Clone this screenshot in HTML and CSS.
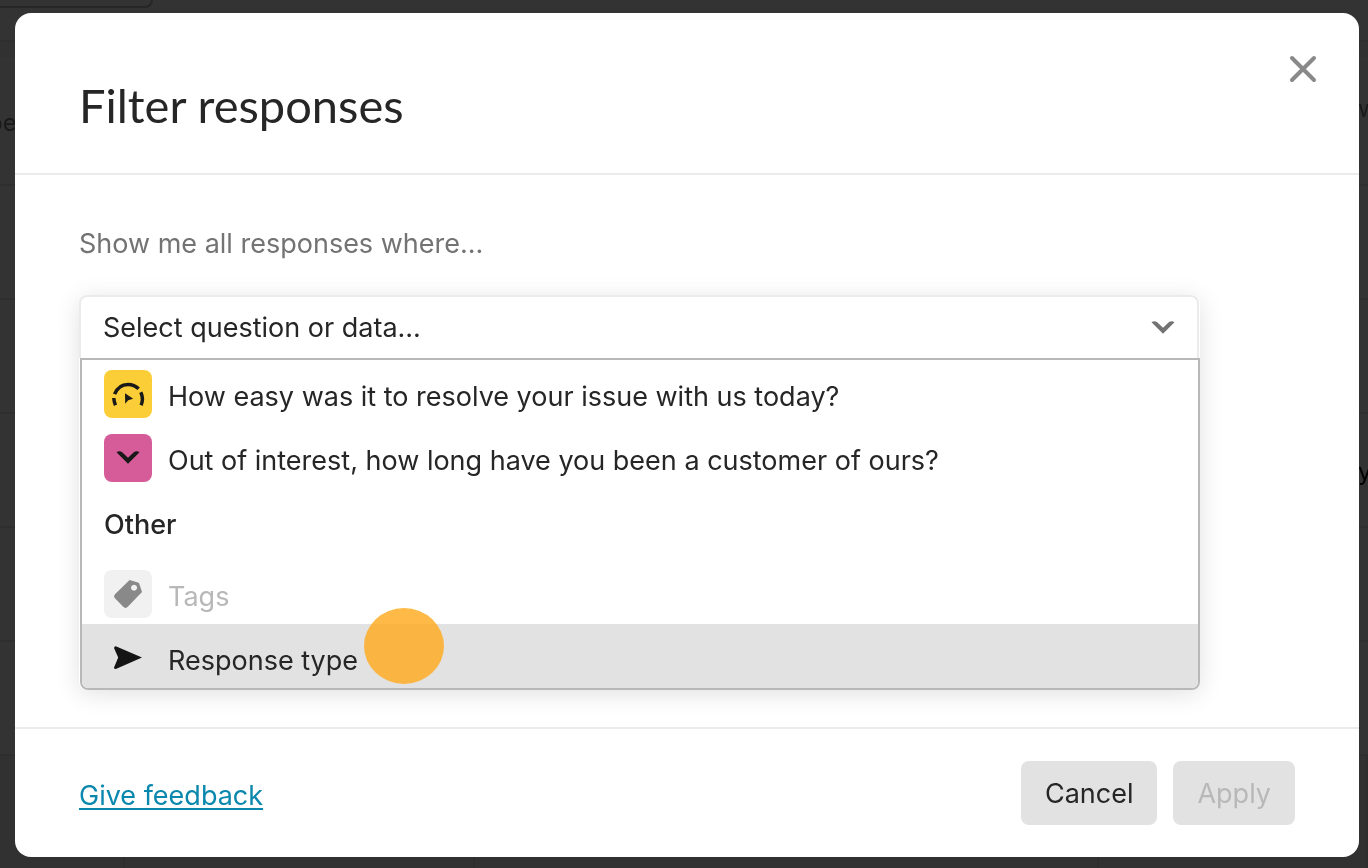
FILE: index.html
```html
<!DOCTYPE html>
<html lang="en">
<head>
    <meta charset="UTF-8">
    <meta name="viewport" content="width=device-width, initial-scale=1.0">
    <title>Filter responses</title>
    <link rel="stylesheet" href="styles.css">
</head>
<body>
    <!-- results table behind the dialog -->
    <div class="page" aria-hidden="true">
        <div class="toolbar"><div class="search"></div></div>
        <div class="strip"></div>
        <div class="row head"><span class="cut-left">pe</span><span class="cut-right">w</span></div>
        <div class="row"></div>
        <div class="row"></div>
        <div class="row"><span></span><span class="cut-right dark">y</span></div>
        <div class="row"></div>
        <div class="row"></div>
        <div class="columns"><div></div><div></div><div></div><div></div></div>
    </div>

    <div class="modal" role="dialog" aria-labelledby="title">
        <header class="modal-header">
            <h1 id="title">Filter responses</h1>
            <button class="close" type="button" aria-label="Close">
                <svg width="28" height="28" viewBox="0 0 28 28"><path d="M3 3l22 22M25 3L3 25" stroke="#898989" stroke-width="4" stroke-linecap="round"/></svg>
            </button>
        </header>

        <main class="modal-body">
            <label class="intro" for="field">Show me all responses where...</label>
            <div class="dropdown">
                <div class="control">
                    <select id="field">
                        <option>Select question or data...</option>
                    </select>
                    <svg class="chevron" width="24" height="14" viewBox="0 0 24 14"><path d="M.5 1.200Q3.500-.6 6.200 1.200L12 6.800l5.800-5.600Q20.500-.6 23.500 1.200L12 12.800z" fill="#737373"/></svg>
                </div>
                <ul class="menu" role="listbox" aria-label="Questions and data">
                    <li class="option" role="option">
                        <span class="icon yellow">
                            <svg width="48" height="48" viewBox="0 0 48 48"><g fill="none" stroke="#191919" stroke-width="3.500"><path d="M10.600 24.200C13 18 18.200 14.400 24 14.400c4.200 0 7.800 1.500 10.600 4.400"/><path d="M9.800 28c.1 2.700.6 4.900 1.700 7.200"/><path d="M36.800 22.300c2 4.300 2 9 .3 13"/></g><path d="M21 23.200l8.200 5.600-5 1.400-3 3.600z" fill="#191919"/></svg>
                        </span>
                        <span class="text">How easy was it to resolve your issue with us today?</span>
                    </li>
                    <li class="option" role="option">
                        <span class="icon pink">
                            <svg width="24" height="14" viewBox="0 0 24 14"><path d="M.5 1.200Q3.500-.6 6.200 1.200L12 6.800l5.800-5.600Q20.500-.6 23.500 1.200L12 12.800z" fill="#191919"/></svg>
                        </span>
                        <span class="text">Out of interest, how long have you been a customer of ours?</span>
                    </li>
                    <li class="group">Other</li>
                    <li class="option disabled" role="option" aria-disabled="true">
                        <span class="icon grey">
                            <svg width="28" height="28" viewBox="0 0 28 28"><path fill-rule="evenodd" d="M15.600 0l8.400 2.400q1 .3 1.300 1.300L28 12 13.800 26.800q-2.300 2.200-4.600 0l-8-8.200q-2.200-2.400 0-4.700zM20 4.700a3 3 0 1 0 .1 0z" fill="#898989"/></svg>
                        </span>
                        <span class="text">Tags</span>
                    </li>
                    <li class="option active" role="option" aria-selected="true">
                        <span class="icon">
                            <svg width="28" height="24" viewBox="0 0 28 24"><path d="M2.400.4L28 11.600 2.400 22.800Q.2 23.400 0 21.400q2.200-4.800 4.200-9.800L0 2Q.4-.2 2.400.4z" fill="#141414"/></svg>
                        </span>
                        <span class="text">Response type<span class="pointer"></span></span>
                    </li>
                </ul>
            </div>
        </main>

        <footer class="modal-footer">
            <a href="#">Give feedback</a>
            <div class="actions">
                <button class="button" type="button">Cancel</button>
                <button class="button" type="button" disabled>Apply</button>
            </div>
        </footer>
    </div>
</body>
</html>
```

FILE: styles.css
```css
* {
    box-sizing: border-box;
}
body {
    margin: 0;
    padding: 13px 9px 11px 15px;
    background-color: #333;
    color: #262627;
    font-family: Inter, "Liberation Sans", sans-serif;
    font-size: 27px;
    line-height: 34px;
}
.page {
    position: fixed;
    inset: 0;
    z-index: -1;
    overflow: hidden;
    display: flex;
    flex-direction: column;
    color: #191919;
    font-size: 24px;
}
.toolbar {
    height: 42px;
    border-bottom: 2px solid #2e2e2e;
}
.search {
    width: 153px;
    height: 8px;
    border: 2px solid #262626;
    border-width: 0 2px 2px 0;
    border-bottom-right-radius: 8px;
}
.strip {
    height: 16px;
    background-color: #313131;
}
.row {
    display: flex;
    justify-content: space-between;
    align-items: center;
    height: 114px;
    padding-top: 4px;
    border-bottom: 2px solid #2e2e2e;
}
.head {
    height: 128px;
}
.cut-left {
    margin-left: -12px;
}
.cut-right {
    width: 10px;
}
.head .cut-right {
    padding-bottom: 28px;
}
.dark {
    color: #000;
}
.columns {
    flex: 1;
    display: grid;
    grid-template-columns: 125fr 350fr 624fr 269fr;
    background-color: #313131;
}
.columns div {
    border-right: 2px solid #2e2e2e;
}
.modal {
    background-color: #fff;
    border-radius: 16px;
}
.modal-header {
    display: flex;
    justify-content: space-between;
    align-items: flex-start;
    padding: 40px 40px 38px 64px;
    border-bottom: 2px solid #ebebeb;
}
.modal-header h1 {
    margin: 22px 0 0;
    font-family: Lato, sans-serif;
    font-size: 47px;
    font-weight: 400;
    line-height: 60px;
}
.close {
    display: flex;
    padding: 2px;
    border: none;
    background: none;
    cursor: pointer;
}
.modal-body {
    padding: 52px 159px 37px 64px;
}
.intro {
    display: block;
    margin-bottom: 34px;
    color: #737373;
}
.dropdown {
    border-radius: 8px;
    box-shadow: 0 4px 24px rgba(0, 0, 0, 0.12);
}
.control {
    display: flex;
    align-items: center;
    margin-right: 1px;
    padding-right: 22px;
    border: 2px solid #ebebeb;
    border-bottom: none;
    border-radius: 8px 8px 0 0;
}
.control select {
    flex: 1;
    height: 61px;
    padding: 0 22px;
    border: none;
    background: none;
    appearance: none;
    color: inherit;
    font: inherit;
}
.chevron {
    pointer-events: none;
}
.menu {
    margin: 0 0 0 1px;
    padding: 0;
    border: 2px solid #b8b8b8;
    border-radius: 0 0 8px 8px;
    background-color: #fff;
    list-style: none;
    overflow: hidden;
}
.option {
    display: flex;
    align-items: center;
    gap: 16px;
    height: 64px;
    padding: 4px 22px 0;
}
.group {
    padding: 20px 22px 18px;
    font-weight: 500;
}
.icon {
    display: flex;
    justify-content: center;
    align-items: center;
    width: 48px;
    height: 48px;
    border-radius: 8px;
}
.yellow {
    background-color: #fbce37;
}
.pink {
    background-color: #d65c99;
}
.grey {
    background-color: #f1f1f1;
}
.text {
    position: relative;
    padding-top: 6px;
}
.disabled {
    color: #b8b8b8;
}
.active {
    background-color: #e2e2e2;
}
/* click marker */
.pointer {
    position: absolute;
    left: 100%;
    bottom: -6px;
    width: 80px;
    height: 76px;
    margin-left: 6px;
    border-radius: 50%;
    background-color: rgba(255, 170, 30, 0.82);
}
.modal-footer {
    display: flex;
    justify-content: space-between;
    align-items: center;
    padding: 32px 64px;
    border-top: 2px solid #ebebeb;
}
.modal-footer a {
    padding-top: 6px;
    color: #0a87ad;
    text-decoration-thickness: 2px;
    text-underline-offset: 3px;
}
.actions {
    display: flex;
    gap: 16px;
}
.button {
    height: 64px;
    padding: 2px 24px 0;
    border: none;
    border-radius: 8px;
    background-color: #e2e2e2;
    color: inherit;
    font: inherit;
    cursor: pointer;
}
.button:disabled {
    color: #b8b8b8;
    cursor: default;
}
```
